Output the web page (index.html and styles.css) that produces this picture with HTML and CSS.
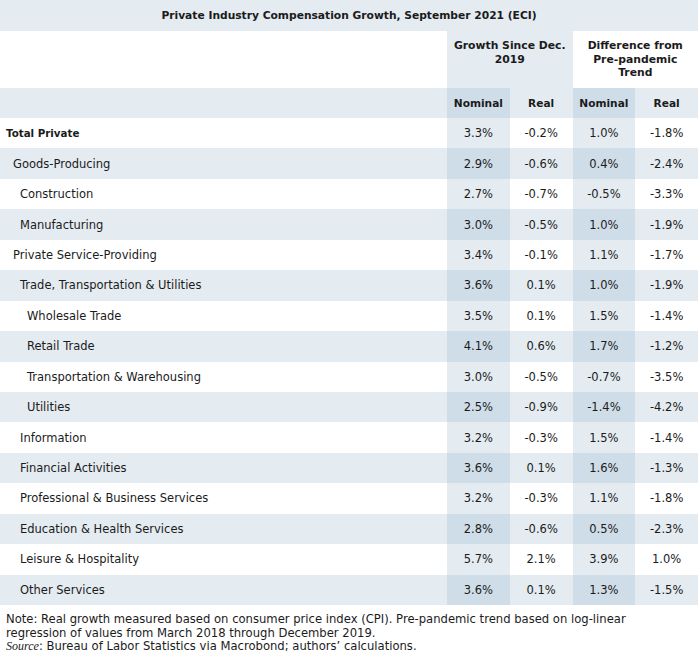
FILE: index.html
```html
<!DOCTYPE html>
<html lang="en">
<head>
<meta charset="utf-8">
<title>Private Industry Compensation Growth</title>
<link rel="stylesheet" href="styles.css">
</head>
<body>
<div class="page">
<table class="eci">
  <colgroup>
    <col class="c-label">
    <col class="c-num">
    <col class="c-num">
    <col class="c-num">
    <col class="c-num">
  </colgroup>
  <thead>
    <tr class="title-row">
      <th colspan="5">Private Industry Compensation Growth, September 2021 (ECI)</th>
    </tr>
    <tr class="group-row">
      <th class="blank"></th>
      <th colspan="2" class="group shade">Growth Since Dec.<br>2019</th>
      <th colspan="2" class="group">Difference from<br>Pre-pandemic<br>Trend</th>
    </tr>
    <tr class="sub-row stripe">
      <th class="blank"></th>
      <th class="nom">Nominal</th>
      <th>Real</th>
      <th class="nom">Nominal</th>
      <th>Real</th>
    </tr>
  </thead>
  <tbody>
    <tr><td class="lbl l0 strong">Total Private</td><td class="nom">3.3%</td><td>-0.2%</td><td class="nom">1.0%</td><td>-1.8%</td></tr>
    <tr class="stripe"><td class="lbl l1">Goods-Producing</td><td class="nom">2.9%</td><td>-0.6%</td><td class="nom">0.4%</td><td>-2.4%</td></tr>
    <tr><td class="lbl l2">Construction</td><td class="nom">2.7%</td><td>-0.7%</td><td class="nom">-0.5%</td><td>-3.3%</td></tr>
    <tr class="stripe"><td class="lbl l2">Manufacturing</td><td class="nom">3.0%</td><td>-0.5%</td><td class="nom">1.0%</td><td>-1.9%</td></tr>
    <tr><td class="lbl l1">Private Service-Providing</td><td class="nom">3.4%</td><td>-0.1%</td><td class="nom">1.1%</td><td>-1.7%</td></tr>
    <tr class="stripe"><td class="lbl l2">Trade, Transportation &amp; Utilities</td><td class="nom">3.6%</td><td>0.1%</td><td class="nom">1.0%</td><td>-1.9%</td></tr>
    <tr><td class="lbl l3">Wholesale Trade</td><td class="nom">3.5%</td><td>0.1%</td><td class="nom">1.5%</td><td>-1.4%</td></tr>
    <tr class="stripe"><td class="lbl l3">Retail Trade</td><td class="nom">4.1%</td><td>0.6%</td><td class="nom">1.7%</td><td>-1.2%</td></tr>
    <tr><td class="lbl l3">Transportation &amp; Warehousing</td><td class="nom">3.0%</td><td>-0.5%</td><td class="nom">-0.7%</td><td>-3.5%</td></tr>
    <tr class="stripe"><td class="lbl l3">Utilities</td><td class="nom">2.5%</td><td>-0.9%</td><td class="nom">-1.4%</td><td>-4.2%</td></tr>
    <tr><td class="lbl l2">Information</td><td class="nom">3.2%</td><td>-0.3%</td><td class="nom">1.5%</td><td>-1.4%</td></tr>
    <tr class="stripe"><td class="lbl l2">Financial Activities</td><td class="nom">3.6%</td><td>0.1%</td><td class="nom">1.6%</td><td>-1.3%</td></tr>
    <tr><td class="lbl l2">Professional &amp; Business Services</td><td class="nom">3.2%</td><td>-0.3%</td><td class="nom">1.1%</td><td>-1.8%</td></tr>
    <tr class="stripe"><td class="lbl l2">Education &amp; Health Services</td><td class="nom">2.8%</td><td>-0.6%</td><td class="nom">0.5%</td><td>-2.3%</td></tr>
    <tr><td class="lbl l2">Leisure &amp; Hospitality</td><td class="nom">5.7%</td><td>2.1%</td><td class="nom">3.9%</td><td>1.0%</td></tr>
    <tr class="stripe"><td class="lbl l2">Other Services</td><td class="nom">3.6%</td><td>0.1%</td><td class="nom">1.3%</td><td>-1.5%</td></tr>
  </tbody>
</table>
<p class="note">Note: Real growth measured based on consumer price index (CPI). Pre-pandemic trend based on log-linear<br>regression of values from March 2018 through December 2019.<br><span class="src">Source</span>: Bureau of Labor Statistics via Macrobond; authors’ calculations.</p>
</div>
</body>
</html>
```

FILE: styles.css
```css
html, body {
  margin: 0;
  padding: 0;
  background: #ffffff;
}

body {
  font-family: "DejaVu Sans", "Liberation Sans", sans-serif;
  color: #1b1b1b;
}

.page {
  width: 698px;
}

.eci {
  width: 698px;
  border-collapse: collapse;
  border-spacing: 0;
  table-layout: fixed;
}

.c-label { width: 447px; }
.c-num { width: 62.75px; }

.eci th,
.eci td {
  padding: 0;
  text-align: center;
  vertical-align: middle;
}

.eci th {
  font-weight: 700;
  font-size: 10.6px;
}

.title-row th {
  height: 31px;
  background: #e4ebf1;
  font-size: 10.7px;
}

.group-row th {
  height: 57px;
  vertical-align: top;
  padding-top: 8px;
  box-sizing: border-box;
  line-height: 13.5px;
  font-size: 10.8px;
}

.group-row .shade {
  background: #e4ebf1;
}

.sub-row th {
  height: 30px;
}

.eci tbody td {
  height: 30.45px;
  font-size: 11.5px;
}

.stripe th,
.stripe td {
  background: #e4ebf1;
}

.eci .nom {
  background: #e4ebf1;
}

.eci .stripe .nom {
  background: #cfdde8;
}

.eci td.lbl {
  text-align: left;
}

.eci td.l0 { padding-left: 6px; }
.eci td.l1 { padding-left: 13px; }
.eci td.l2 { padding-left: 20px; }
.eci td.l3 { padding-left: 27px; }

.eci td.strong {
  font-weight: 700;
  font-size: 10.3px;
}

.note {
  margin: 8px 0 0 6px;
  font-size: 11.6px;
  line-height: 13.5px;
}

.src {
  font-family: "Liberation Serif", serif;
  font-style: italic;
  font-size: 12px;
}
```
